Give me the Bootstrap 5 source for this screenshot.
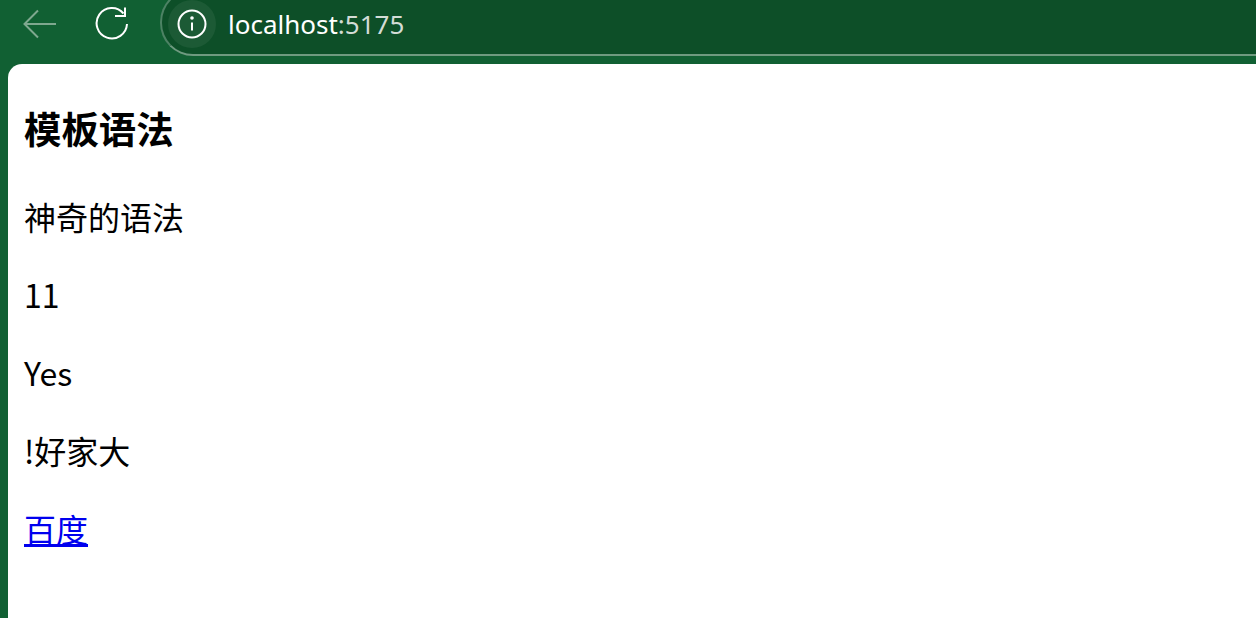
<!DOCTYPE html>
<html lang="zh">
<head>
<meta charset="utf-8">
<title>localhost:5175</title>
<link href="https://cdn.jsdelivr.net/npm/bootstrap@5.3.0/dist/css/bootstrap.min.css" rel="stylesheet">
<style>
html, body { height: 100%; }
body { background: #116033; overflow: hidden; font-family: "Noto Sans CJK SC", sans-serif; color: #000; }
.toolbar { height: 64px; padding-left: 16px; }
.tool-btn { width: 48px; height: 48px; margin-right: 24px; }
.addr { height: 67px; margin-top: -11px; padding-top: 9px; background: #0d4f28; border: 2px solid #6f9a80; border-left-color: #4d8264; border-right: 0; border-top-left-radius: 33px; border-bottom-left-radius: 33px; padding-left: 6px; }
.info-circle { width: 48px; height: 48px; background: #1c5a35; border-radius: 50%; }
.addr-text { font-family: "Noto Sans", sans-serif; font-size: 26px; color: #fff; margin-left: 12px; line-height: 48px; }
.addr-port { color: #d3dcd6; }
.page-pane { background: #fff; margin-left: 8px; height: calc(100% - 64px); border-top-left-radius: 14px; padding: 37px 16px 0; }
.page-pane h3 { font-size: 37.4px; font-weight: 700; line-height: 1.45; margin: 0 0 38px; }
.page-pane p { font-size: 32px; line-height: 46px; margin: 32px 0 0; }
.page-pane a { color: #0000ee; text-decoration: underline; }
</style>
</head>
<body>
<div class="toolbar d-flex align-items-start">
  <div class="tool-btn d-flex align-items-center justify-content-center">
    <svg width="34" height="30" viewBox="0 0 34 30" fill="none" stroke="#7fa88f" stroke-width="2"><path d="M1.5 15H33M15 1.5 1.5 15 15 28.5"/></svg>
  </div>
  <div class="tool-btn d-flex align-items-center justify-content-center">
    <svg width="34" height="34" viewBox="0 0 34 34" fill="none" stroke="#fff" stroke-width="2"><path d="M28.5 6.5A15.2 15.2 0 1 0 32 17"/><path d="M20 9h10V0.5"/></svg>
  </div>
  <div class="addr flex-grow-1 d-flex align-items-start">
    <div class="info-circle d-flex align-items-center justify-content-center">
      <svg width="30" height="30" viewBox="0 0 30 30" fill="none" stroke="#fff" stroke-width="2"><circle cx="15" cy="15" r="13.5"/><path d="M15 13.5v8"/><circle cx="15" cy="9" r=".8" fill="#fff"/></svg>
    </div>
    <span class="addr-text">localhost<span class="addr-port">:5175</span></span>
  </div>
</div>
<main class="page-pane">
  <h3>模板语法</h3>
  <p>神奇的语法</p>
  <p>11</p>
  <p>Yes</p>
  <p>!好家大</p>
  <p><a href="#">百度</a></p>
</main>
<script src="https://cdn.jsdelivr.net/npm/bootstrap@5.3.0/dist/js/bootstrap.bundle.min.js"></script>
</body>
</html>
